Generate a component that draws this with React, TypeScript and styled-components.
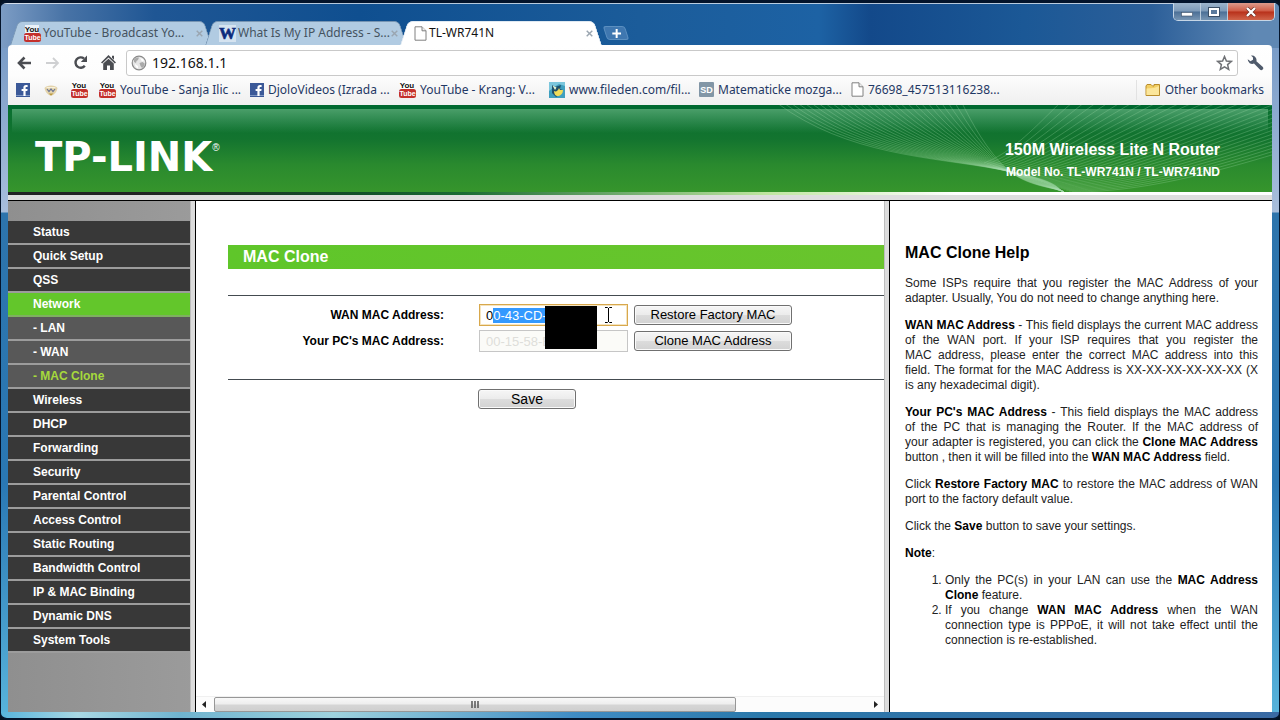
import React from "react";
import styled, { createGlobalStyle, css } from "styled-components";

const ui = `"Noto Sans", "Open Sans", sans-serif`;
const arial = `"Liberation Sans", Arial, sans-serif`;

const GlobalStyle = createGlobalStyle`
  *, *::before, *::after { box-sizing: border-box; }
  html, body { margin: 0; padding: 0; }
  body { background: #03101f; font-family: ${arial}; }
  button, input { font-family: inherit; margin: 0; }
  svg { flex-shrink: 0; }
`;

/* ---------- window frame ---------- */

const Window = styled.div`
  min-height: 100vh;
  display: flex;
  flex-direction: column;
  border: 1px solid #04142b;
  border-top-width: 3px;
  border-bottom-width: 2px;
  border-radius: 7px;
  padding: 0 7px 6px;
  background:
    linear-gradient(#ffffffb0, #ffffffb0) top / 100% 1px no-repeat,
    linear-gradient(90deg, #58b4dc, #a8d8e4 6%, #6fb4d0 14%, #9ed2de 26%, #3f8cc4 45%, #2a78aa 60%, #3a6aa4 100%) bottom / 100% 6px no-repeat,
    linear-gradient(90deg, #7c9cc4 0, #4873a6 5%, #1f5694 12%, #0f4f90 28%, #1b5c9a 50%, #1d62a4 64%, #13498a 68%, #1b5896 80%, #2c5f99 90%, #5f88b4 98%) top / 100% 45px no-repeat,
    linear-gradient(#6d93c2, #a8bedc 209px, #2d74ac 210px, #2a78b4 480px, #58b4dc);
`;

const TitleBar = styled.header`
  position: relative;
  height: 42px;
  display: flex;
  align-items: flex-end;
`;

const Tabs = styled.nav`
  display: flex;
  align-items: flex-end;
  padding-left: 2px;
`;

const Tab = styled.a<{ $active?: boolean }>`
  --fill: ${(p) => (p.$active ? "#ffffff" : "#b1cbe2")};
  --edge: ${(p) => (p.$active ? "#dfe9f2" : "#7795b3")};
  position: relative;
  z-index: ${(p) => (p.$active ? 2 : 1)};
  width: 202px;
  height: 24px;
  margin-right: -7px;
  padding: 0 9px 0 14px;
  display: flex;
  align-items: center;
  gap: 2px;
  font: 12px/24px ${ui};
  color: ${(p) => (p.$active ? "#111" : "#45535f")};
  text-decoration: none;
  white-space: nowrap;
  &::before, &::after {
    content: "";
    position: absolute;
    z-index: -1;
    top: 0;
    bottom: 0;
    background: var(--fill);
    border-top: 1px solid var(--edge);
  }
  &::before {
    left: 4px;
    right: 40%;
    transform: skewX(-18deg);
    border-left: 1px solid var(--edge);
    border-radius: 5px 0 0 0;
  }
  &::after {
    left: 40%;
    right: 4px;
    transform: skewX(18deg);
    border-right: 1px solid var(--edge);
    border-radius: 0 5px 0 0;
  }
`;

const TabText = styled.span`
  flex: 1;
  min-width: 0;
`;

const NewTab = styled.button`
  width: 22px;
  height: 14px;
  margin: 0 0 5px 10px;
  padding: 0;
  display: grid;
  place-items: center;
  border: 1px solid #5b8fc0;
  border-radius: 3px;
  background: #3f77b0;
  transform: skewX(18deg);
  svg { transform: skewX(-18deg); }
`;

const WindowButtons = styled.div`
  position: absolute;
  top: 0;
  right: -3px;
  display: flex;
  border: 1px solid #c6d6e6;
  border-top: 0;
  border-radius: 0 0 5px 5px;
  overflow: hidden;
`;

const WindowButton = styled.button<{ $close?: boolean }>`
  width: ${(p) => (p.$close ? 46 : 27)}px;
  height: 17px;
  padding: 0;
  display: grid;
  place-items: center;
  border: 0;
  border-right: ${(p) => (p.$close ? "0" : "1px solid #b9cbdc")};
  background: ${(p) =>
    p.$close
      ? "linear-gradient(#dc9a8c, #cf5a44 48%, #b8301a 52%, #d0644a)"
      : "linear-gradient(#9db4cb, #7d9ab8 48%, #4b6f96 52%, #7795b3)"};
`;

/* ---------- toolbars ---------- */

const Chrome = styled.div`
  border-radius: 4px 4px 0 0;
  background: linear-gradient(#ffffff, #fdfdfd 30px, #efefef);
`;

const Toolbar = styled.div`
  height: 35px;
  display: flex;
  align-items: center;
  padding: 0 8px 0 9px;
`;

const IconButton = styled.button`
  width: 28px;
  height: 24px;
  padding: 0;
  border: 0;
  background: none;
  display: flex;
  align-items: center;
  justify-content: flex-start;
`;

const AddressBar = styled.label`
  flex: 1;
  height: 26px;
  margin: 0 9px 0 -3px;
  padding: 0 4px;
  display: flex;
  align-items: center;
  gap: 5px;
  border: 1px solid #c9c9c9;
  border-radius: 3px;
  background: #fff;
`;

const AddressInput = styled.input`
  flex: 1;
  min-width: 0;
  padding: 0;
  border: 0;
  outline: 0;
  background: none;
  font: 14px/20px ${ui};
  color: #111;
`;

const Bookmarks = styled.nav`
  height: 25px;
  display: flex;
  align-items: center;
  padding: 0 8px 6px;
`;

const Bookmark = styled.a<{ $w?: number }>`
  display: flex;
  align-items: center;
  gap: 4px;
  flex: 0 0 ${(p) => (p.$w ? `${p.$w}px` : "auto")};
  font: 12px/20px ${ui};
  color: #1f3864;
  text-decoration: none;
  white-space: nowrap;
`;

const OtherBookmarks = styled(Bookmark)`
  margin-left: auto;
  padding-left: 8px;
  border-left: 1px solid #e2e2e2;
`;

/* ---------- router page ---------- */

const Page = styled.div`
  flex: 1;
  display: flex;
  flex-direction: column;
  background: #fff;
`;

const Banner = styled.div`
  position: relative;
  height: 87px;
  display: flex;
  align-items: center;
  justify-content: space-between;
  padding: 0 52px 0 27px;
  color: #fff;
  background: linear-gradient(#00682f 0, #00682f 4px, #0a7030 5px, #13742f 34px, #2a8a2e 60px, #36952c);
  &::before {
    content: "";
    position: absolute;
    inset: 4px 4px auto;
    height: 24px;
    background: linear-gradient(#4a9e69, #1d7b3b00);
  }
`;

const Waves = styled.svg`
  position: absolute;
  right: 0;
  bottom: 0;
  width: 500px;
  height: 87px;
`;

const Brand = styled.div`
  position: relative;
  display: flex;
  align-items: flex-start;
  padding-top: 16px;
  font: 900 40px/40px "DejaVu Sans", sans-serif;
  sup { font: 10px/10px ${arial}; padding-top: 6px; }
`;

const Model = styled.div`
  position: relative;
  padding-top: 24px;
  text-align: right;
  font: bold 12px/22px ${arial};
  strong { display: block; font-size: 16px; }
`;

const BannerEdge = styled.div`
  height: 9px;
  border-bottom: 1px solid #000;
  background:
    linear-gradient(90deg, #222 10%, #12502a 28%, #1b6b34 36%, #bfe6a0 60%, #fff 75%) top / 100% 3px no-repeat,
    linear-gradient(#c4c4c4, #dedede 2px);
`;

const Frames = styled.div`
  flex: 1;
  display: flex;
`;

const frameDivider = css`
  border-right: 1px solid #000;
  box-shadow: inset -4px 0 #dcdcdc, inset -5px 0 #bdbdbd;
`;

const Menu = styled.nav`
  flex: 0 0 188px;
  padding: 20px 5px 20px 0;
  ${frameDivider}
  background: linear-gradient(90deg, #8f8f8f, #9b9b9b);
`;

const MenuItem = styled.a<{ $kind?: "sub" | "open" | "current" }>`
  display: block;
  height: 24px;
  padding-left: 25px;
  border-bottom: 2px solid ${(p) => (p.$kind === "open" ? "#7fb060" : "#9c9c9c")};
  font: bold 12px/22px ${arial};
  text-decoration: none;
  color: ${(p) => (p.$kind === "current" ? "#a6d93c" : "#fff")};
  background: ${(p) => (p.$kind === "open" ? "#63c62b" : p.$kind ? "#585858" : "#383838")};
`;

const Main = styled.main`
  flex: 1;
  min-width: 0;
  display: flex;
  flex-direction: column;
  padding-right: 5px;
  ${frameDivider}
`;

const MainBody = styled.form`
  flex: 1;
  padding: 44px 0 0 32px;
`;

const Title = styled.h1`
  margin: 0 0 26px;
  padding-left: 15px;
  font: bold 16px/24px ${arial};
  color: #fff;
  background: linear-gradient(90deg, #5fc62a, #69c42d);
`;

const FieldSet = styled.div`
  height: 85px;
  padding-top: 8px;
  display: flex;
  flex-direction: column;
  gap: 4px;
  border: solid #444b50;
  border-width: 1px 0;
`;

const FieldRow = styled.div`
  display: grid;
  grid-template-columns: 245px 149px 158px;
  align-items: center;
  column-gap: 6px;
`;

const FieldLabel = styled.label`
  padding-right: 29px;
  text-align: right;
  font: bold 12px/22px ${arial};
  color: #000;
`;

const FieldBox = styled.div`
  position: relative;
`;

const Field = styled.input<{ $focused?: boolean }>`
  display: block;
  width: 100%;
  height: 22px;
  padding: 0 6px;
  outline: 0;
  border: 1px solid ${(p) => (p.$focused ? "#d8a84c" : "#c6c6c6")};
  box-shadow: ${(p) => (p.$focused ? "0 0 0 1px #f5e4bf inset" : "none")};
  background: ${(p) => (p.$focused ? "#fff" : "#fbfbf8")};
  font: 13px/20px ${arial};
  color: ${(p) => (p.$focused ? "#000" : "#dededa")};
  &::selection { background: #3399ff; color: #fff; }
`;

const Redaction = styled.div`
  position: absolute;
  left: 66px;
  top: 2px;
  width: 52px;
  height: 43px;
  background: #000;
  z-index: 1;
`;

const Caret = styled.svg`
  position: absolute;
  left: 125px;
  top: 3px;
  width: 9px;
  height: 16px;
`;

const PushButton = styled.button`
  height: 20px;
  padding: 0;
  border: 1px solid #707070;
  border-radius: 3px;
  background: linear-gradient(#f6f6f6, #ececec 48%, #dcdcdc 52%, #d2d2d2);
  box-shadow: inset 0 0 0 1px #fafafa;
  font: 13px/18px ${arial};
  color: #000;
`;

const Submit = styled(PushButton)`
  display: block;
  width: 98px;
  margin: 9px 0 0 250px;
  font-size: 14px;
`;

const ScrollBar = styled.div`
  height: 16px;
  display: flex;
  align-items: center;
  gap: 8px;
  padding: 0 6px;
  border-top: 1px solid #f0f0f0;
  background: #fcfcfc;
`;

const ScrollTrack = styled.div`
  flex: 1;
  display: flex;
`;

const ScrollThumb = styled.div`
  width: 80%;
  height: 15px;
  display: grid;
  place-items: center;
  border: 1px solid #979797;
  border-radius: 2px;
  background: linear-gradient(#f8f8f8, #eeeeee 48%, #d6d6d6 52%, #cfcfcf);
`;

const Help = styled.aside`
  flex: 0 0 382px;
  padding: 42px 14px 20px 15px;
  font: 12px/15px ${arial};
  color: #222;
  text-align: justify;
  h2 { margin: 0 0 13px; font: bold 16px/20px ${arial}; color: #000; }
  p { margin: 0 0 12px; }
  b { color: #000; }
  ol { margin: 0; padding-left: 40px; }
`;

/* ---------- icons ---------- */

const YouTubeIcon = () => (
  <svg width="17" height="17" viewBox="0 0 17 17" aria-hidden="true">
    <rect x="1" width="14" height="8" fill="#fff" opacity="0.75" />
    <text x="8" y="7" textAnchor="middle" fontFamily="Liberation Sans, sans-serif" fontSize="8" fontWeight="bold" fill="#111">You</text>
    <rect x="0" y="8" width="17" height="9" rx="2.5" fill="#c4302b" />
    <text x="8.5" y="15" textAnchor="middle" fontFamily="Liberation Sans, sans-serif" fontSize="7" fontWeight="bold" fill="#fff">Tube</text>
  </svg>
);

const FacebookIcon = () => (
  <svg width="14" height="14" viewBox="0 0 14 14" aria-hidden="true">
    <rect width="14" height="14" fill="#3b5998" />
    <rect y="12" width="14" height="1" fill="#7f97c4" />
    <path d="M7.4 13V8H5.6V6h1.8V4.6C7.4 2.9 8.4 2 10 2h1.6v2h-1.1c-.7 0-.9.4-.9 1v1h2l-.3 2H9.6v5z" fill="#fff" />
  </svg>
);

const WIcon = () => (
  <svg width="17" height="17" viewBox="0 0 17 17" aria-hidden="true">
    <rect width="17" height="17" fill="#e4edf6" opacity="0.7" />
    <text x="8.5" y="14" textAnchor="middle" fontFamily="Liberation Serif, serif" fontSize="17" fontWeight="bold" fill="#0b2a7c" stroke="#0b2a7c" strokeWidth="0.6">W</text>
  </svg>
);

const PageIcon = () => (
  <svg width="13" height="15" viewBox="0 0 13 15" aria-hidden="true">
    <path d="M1 .8h7l4 4v9.4H1z" fill="#fff" stroke="#808080" />
    <path d="M8 .8v4h4" fill="#eee" stroke="#808080" />
  </svg>
);

const BadgeIcon = () => (
  <svg width="14" height="14" viewBox="0 0 14 14" aria-hidden="true">
    <path d="M.5 5C2 1.500 12 1.500 13.500 5 13 9 10.500 11.500 7 13 3.500 11.500 1 9 .5 5z" fill="#e3d3ab" />
    <path d="M2 4h10l-1.500 1.200h-7z" fill="#f8f1dc" />
    <path d="M3 6l2 2.600 2-2.600 2 2.600 2-2.600" fill="none" stroke="#6b7494" strokeWidth="1.200" />
    <path d="M4.500 10.500h5L7 12.500z" fill="#b8963c" />
  </svg>
);

const FiledenIcon = () => (
  <svg width="16" height="16" viewBox="0 0 16 16" aria-hidden="true">
    <rect width="16" height="16" fill="#3f9fbf" />
    <path d="M0 0h16v4L10 2 5 5 0 9z" fill="#7cc6dc" />
    <path d="M3 3l3 2 6-2-1 4 3 1-2 4-5 3-4-4z" fill="#20506a" />
    <path d="M5 9c2 1 4 0 5-3l1 2h3c0 4-3 6-5.500 6C6.500 14 5 12 5 9z" fill="#f0dc5a" />
    <path d="M3.500 3.500L6 8l1.500-2.500z" fill="#e9f4d0" />
  </svg>
);

const SdIcon = () => (
  <svg width="15" height="15" viewBox="0 0 15 15" aria-hidden="true">
    <rect width="15" height="15" rx="1" fill="#8296a6" />
    <text x="7.500" y="11" textAnchor="middle" fontFamily="Liberation Sans, sans-serif" fontSize="9" fontWeight="bold" fill="#fff">SD</text>
  </svg>
);

const FolderIcon = () => (
  <svg width="16" height="14" viewBox="0 0 16 14" aria-hidden="true">
    <path d="M1 12.500V3l1-1.500h4L7.500 3H9V1.500h5.500v11z" fill="#f3cf63" stroke="#b98d2c" />
    <path d="M1.500 12V5.500L9 5l5-2v9z" fill="#fbe69b" />
  </svg>
);

const GlobeIcon = () => (
  <svg width="16" height="16" viewBox="0 0 16 16" aria-hidden="true">
    <circle cx="8" cy="8" r="6.800" fill="#e6e6e6" stroke="#8a8a8a" strokeWidth="1.200" />
    <path d="M3 4.500C4.500 2.800 6 2.300 8 2.500L7 5 5.500 6 5 8 3 7zM8.500 8l3-1 2.200 1.500c0 2-1 3.500-2.700 4.500L9.500 11z" fill="#aaa" />
    <path d="M9 3l3 1 1 2-2 .500zM4 9l3 2v2.500c-1.500-.500-3-2-3-4.500z" fill="#fff" />
  </svg>
);

const BackIcon = ({ color }: { color: string }) => (
  <svg width="15" height="14" viewBox="0 0 15 14" aria-hidden="true">
    <path d="M7.500 1.500L2 7l5.500 5.500M2.500 7H14" fill="none" stroke={color} strokeWidth="2.600" />
  </svg>
);

const ForwardIcon = ({ color }: { color: string }) => (
  <svg width="15" height="14" viewBox="0 0 15 14" aria-hidden="true">
    <path d="M8 2l5 5-5 5M12.500 7H1" fill="none" stroke={color} strokeWidth="1.800" />
  </svg>
);

const ReloadIcon = () => (
  <svg width="15" height="15" viewBox="0 0 15 15" aria-hidden="true">
    <path d="M11.800 10.800A5.200 5.200 0 1 1 11 3.500" fill="none" stroke="#4b4d52" strokeWidth="2.400" />
    <path d="M14 .500V7H7.800z" fill="#4b4d52" />
  </svg>
);

const HomeIcon = () => (
  <svg width="15" height="15" viewBox="0 0 15 15" aria-hidden="true">
    <path d="M7.500 0L15 7.500l-1.200 1L7.500 2.600 1.200 8.500 0 7.500zM11 .800h2v4l-2-2z" fill="#4b4d52" />
    <path d="M2.200 8.600L7.500 3.700l5.300 4.900V15H9v-4.500H6V15H2.200z" fill="#4b4d52" />
  </svg>
);

const StarIcon = () => (
  <svg width="17" height="16" viewBox="0 0 17 16" aria-hidden="true">
    <path d="M8.500 1.500l1.900 4.500 4.900.400-3.700 3.200 1.100 4.800-4.200-2.600-4.200 2.600 1.100-4.800L1.700 6.400 6.600 6z" fill="#fff" stroke="#707276" strokeWidth="1.500" />
  </svg>
);

const WrenchIcon = () => (
  <svg width="17" height="16" viewBox="0 0 17 16" aria-hidden="true">
    <path d="M4 .600A4.600 4.600 0 0 1 9.400 6.200l6.200 5.600a1.900 1.900 0 0 1-2.700 2.800L7 8.600A4.600 4.600 0 0 1 .700 4.300L3.500 6.200 6 4.800 6 2.500z" fill="#4f5a6b" />
  </svg>
);

const CloseIcon = () => (
  <svg width="7" height="7" viewBox="0 0 7 7" aria-hidden="true">
    <path d="M.700.700l5.600 5.600M6.300.700L.700 6.300" stroke="#9aa5b0" strokeWidth="1.400" />
  </svg>
);

const range = (n: number) => Array.from({ length: n }, (_, i) => i / (n - 1));

const BannerWaves = () => (
  <Waves viewBox="0 0 500 87" aria-hidden="true">
    <g fill="none" stroke="#a8dcae" strokeWidth="0.800">
      {range(28).map((t) => (
        <path
          key={`l${t}`}
          opacity={0.36}
          d={`M${5 + 185 * t} -2 C${75 + 125 * t} ${50 - 32 * t} ${160 + 55 * t} ${52 - 6 * t} ${225 + 10 * t} 64 S282 82 ${292} 87`}
        />
      ))}
      {range(32).map((t) => (
        <path
          key={`r${t}`}
          opacity={0.34}
          d={`M${212 + 88 * t} ${58 + 29 * t} C${240 + 160 * t} ${48 + 39 * t} ${265 + 235 * t} ${20 + 30 * t} ${290 + 380 * t} -4`}
        />
      ))}
    </g>
  </Waves>
);

/* ---------- data ---------- */

type Kind = "sub" | "open" | "current";
const menu: [string, Kind?][] = [
  ["Status"],
  ["Quick Setup"],
  ["QSS"],
  ["Network", "open"],
  ["- LAN", "sub"],
  ["- WAN", "sub"],
  ["- MAC Clone", "current"],
  ["Wireless"],
  ["DHCP"],
  ["Forwarding"],
  ["Security"],
  ["Parental Control"],
  ["Access Control"],
  ["Static Routing"],
  ["Bandwidth Control"],
  ["IP & MAC Binding"],
  ["Dynamic DNS"],
  ["System Tools"],
];

const bookmarks: { icon: React.ReactNode; text?: string; w: number }[] = [
  { icon: <FacebookIcon />, w: 28 },
  { icon: <BadgeIcon />, w: 27 },
  { icon: <YouTubeIcon />, w: 28 },
  { icon: <YouTubeIcon />, text: "YouTube - Sanja Ilic ...", w: 151 },
  { icon: <FacebookIcon />, text: "DjoloVideos (Izrada ...", w: 149 },
  { icon: <YouTubeIcon />, text: "YouTube - Krang: V...", w: 150 },
  { icon: <FiledenIcon />, text: "www.fileden.com/fil...", w: 150 },
  { icon: <SdIcon />, text: "Matematicke mozga...", w: 152 },
  { icon: <PageIcon />, text: "76698_457513116238...", w: 150 },
];

export default function App() {
  const wan = React.useRef<HTMLInputElement>(null);

  React.useEffect(() => {
    wan.current?.focus({ preventScroll: true });
    wan.current?.setSelectionRange(1, 12);
  }, []);

  return (
    <>
      <GlobalStyle />
      <Window>
        <TitleBar>
          <Tabs aria-label="Tabs">
            <Tab href="#youtube">
              <YouTubeIcon />
              <TabText>YouTube - Broadcast Yo...</TabText>
              <CloseIcon />
            </Tab>
            <Tab href="#ip">
              <WIcon />
              <TabText>What Is My IP Address - S...</TabText>
              <CloseIcon />
            </Tab>
            <Tab href="#router" $active>
              <PageIcon />
              <TabText>TL-WR741N</TabText>
              <CloseIcon />
            </Tab>
          </Tabs>
          <NewTab aria-label="New tab">
            <svg width="9" height="9" viewBox="0 0 9 9" aria-hidden="true">
              <path d="M4.500 0v9M0 4.500h9" stroke="#fff" strokeWidth="2" />
            </svg>
          </NewTab>
          <WindowButtons>
            <WindowButton aria-label="Minimize">
              <svg width="12" height="10" viewBox="0 0 12 10" aria-hidden="true">
                <rect x="0.500" y="5.500" width="11" height="3.500" fill="#fff" stroke="#3b4f66" strokeWidth="0.600" />
              </svg>
            </WindowButton>
            <WindowButton aria-label="Maximize">
              <svg width="12" height="10" viewBox="0 0 12 10" aria-hidden="true">
                <rect x="1.500" y="1.500" width="9" height="7" fill="none" stroke="#3b4f66" strokeWidth="3" />
                <rect x="2" y="2" width="8" height="6" fill="#5b7a9c" stroke="#fff" strokeWidth="2" />
              </svg>
            </WindowButton>
            <WindowButton aria-label="Close" $close>
              <svg width="12" height="10" viewBox="0 0 12 10" aria-hidden="true">
                <path d="M2 1l8 8M10 1L2 9" stroke="#6a2a20" strokeWidth="3.600" />
                <path d="M2 1l8 8M10 1L2 9" stroke="#fff" strokeWidth="2.400" />
              </svg>
            </WindowButton>
          </WindowButtons>
        </TitleBar>

        <Chrome>
          <Toolbar>
            <IconButton aria-label="Back"><BackIcon color="#4b4d52" /></IconButton>
            <IconButton aria-label="Forward"><ForwardIcon color="#cfd0d2" /></IconButton>
            <IconButton aria-label="Reload"><ReloadIcon /></IconButton>
            <IconButton aria-label="Home"><HomeIcon /></IconButton>
            <AddressBar>
              <GlobeIcon />
              <AddressInput aria-label="Address" defaultValue="192.168.1.1" />
              <StarIcon />
            </AddressBar>
            <WrenchIcon />
          </Toolbar>
          <Bookmarks aria-label="Bookmarks">
            {bookmarks.map((b, i) => (
              <Bookmark key={i} href="#bookmark" $w={b.w}>
                {b.icon}
                {b.text && <span>{b.text}</span>}
              </Bookmark>
            ))}
            <OtherBookmarks href="#other">
              <FolderIcon />
              <span>Other bookmarks</span>
            </OtherBookmarks>
          </Bookmarks>
        </Chrome>

        <Page>
          <Banner>
            <BannerWaves />
            <Brand>
              TP-LINK<sup>®</sup>
            </Brand>
            <Model>
              <strong>150M Wireless Lite N Router</strong>
              Model No. TL-WR741N / TL-WR741ND
            </Model>
          </Banner>
          <BannerEdge />
          <Frames>
            <Menu aria-label="Router menu">
              {menu.map(([text, kind]) => (
                <MenuItem key={text} href="#menu" $kind={kind}>
                  {text}
                </MenuItem>
              ))}
            </Menu>

            <Main>
              <MainBody onSubmit={(e) => e.preventDefault()}>
                <Title>MAC Clone</Title>
                <FieldSet>
                  <FieldRow>
                    <FieldLabel htmlFor="wan">WAN MAC Address:</FieldLabel>
                    <FieldBox>
                      <Field id="wan" ref={wan} $focused defaultValue="00-43-CD-1" />
                      <Redaction />
                      <Caret viewBox="0 0 9 16" aria-hidden="true">
                        <path d="M1 .500h2.500l1 1 1-1H8M1 15.500h2.500l1-1 1 1H8M4.500 1v14" fill="none" stroke="#000" />
                      </Caret>
                    </FieldBox>
                    <PushButton type="button">Restore Factory MAC</PushButton>
                  </FieldRow>
                  <FieldRow>
                    <FieldLabel htmlFor="pc">Your PC's MAC Address:</FieldLabel>
                    <FieldBox>
                      <Field id="pc" readOnly defaultValue="00-15-58-E" />
                    </FieldBox>
                    <PushButton type="button">Clone MAC Address</PushButton>
                  </FieldRow>
                </FieldSet>
                <Submit type="submit">Save</Submit>
              </MainBody>
              <ScrollBar>
                <svg width="4" height="7" viewBox="0 0 4 7" aria-hidden="true">
                  <path d="M4 0v7L0 3.500z" fill="#222" />
                </svg>
                <ScrollTrack>
                  <ScrollThumb>
                    <svg width="8" height="7" viewBox="0 0 8 7" aria-hidden="true">
                      <path d="M1 0v7M4 0v7M7 0v7" stroke="#555" strokeWidth="1.500" />
                    </svg>
                  </ScrollThumb>
                </ScrollTrack>
                <svg width="4" height="7" viewBox="0 0 4 7" aria-hidden="true">
                  <path d="M0 0v7l4-3.500z" fill="#222" />
                </svg>
              </ScrollBar>
            </Main>

            <Help>
              <h2>MAC Clone Help</h2>
              <p>
                Some ISPs require that you register the MAC Address of your adapter. Usually, You do not need to change
                anything here.
              </p>
              <p>
                <b>WAN MAC Address</b> - This field displays the current MAC address of the WAN port. If your ISP
                requires that you register the MAC&nbsp;address, please enter the correct MAC address into this
                field.&nbsp;The&nbsp;format for the MAC Address is XX-XX-XX-XX-XX-XX (X is any&nbsp;hexadecimal digit).
              </p>
              <p>
                <b>Your PC's MAC Address</b> - This field displays the MAC address of&nbsp;the&nbsp;PC that is managing
                the Router. If the MAC address of your&nbsp;adapter is registered, you can click the{" "}
                <b>Clone MAC Address</b> button , then it will be filled into the <b>WAN MAC Address</b> field.
              </p>
              <p>
                Click <b>Restore Factory MAC</b> to restore the MAC address of WAN port to the factory default value.
              </p>
              <p>
                Click the <b>Save</b> button to save your settings.
              </p>
              <p>
                <b>Note</b>:
              </p>
              <ol>
                <li>
                  Only the PC(s) in your LAN can use the <b>MAC Address Clone</b> feature.
                </li>
                <li>
                  If you change <b>WAN MAC Address</b> when the WAN connection type is PPPoE, it will not take effect
                  until the connection is re-established.
                </li>
              </ol>
            </Help>
          </Frames>
        </Page>
      </Window>
    </>
  );
}
